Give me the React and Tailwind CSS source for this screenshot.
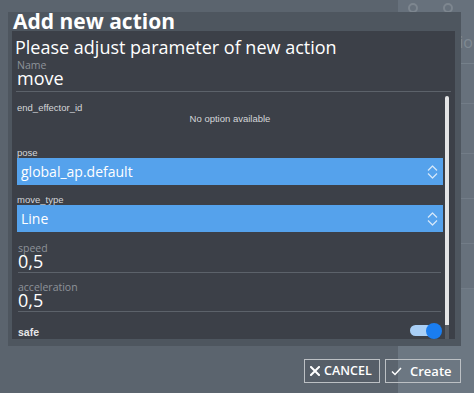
import React from "react";

const Chev = () => (
  <svg width="11" height="16" viewBox="0 0 11 16" fill="none" stroke="#d6e8fa" strokeWidth="1.2" strokeLinejoin="round">
    <path d="M1 6.5 L5.5 2 L10 6.5" />
    <path d="M1 9.5 L5.5 14 L10 9.5" />
  </svg>
);

const Select = ({ label, value, mt }) => (
  <div className={mt}>
    <div className="h-[10px] leading-[10px] text-[9.5px] text-[#d4d6d9]" style={{ fontFamily: '"Liberation Sans", Arial, sans-serif' }}>{label}</div>
    <div className="h-[27px] bg-[#55a2ec] flex items-center justify-between pl-[4px] pr-[5px]">
      <span className="text-[14px] text-white leading-none">{value}</span>
      <Chev />
    </div>
  </div>
);

const NumField = ({ label, value, mt }) => (
  <div className={`${mt} ml-[1px] mr-[2px] border-b border-[#5c626a] pb-[3px]`}>
    <div className="h-[10px] leading-[10px] text-[10.5px] text-[#8e939a]">{label}</div>
    <div className="h-[16px] leading-[16px] text-[18px] text-white">{value}</div>
  </div>
);

export default function App() {
  return (
    <div className="relative w-[474px] h-[393px] overflow-hidden bg-[#5b646e]" style={{ fontFamily: '"Open Sans", "Noto Sans", sans-serif' }}>
      {/* background app */}
      <div className="flex h-full">
        <div className="flex-1" />
        <div className="w-[76px] h-full bg-[#67717c] flex flex-col">
          <div className="h-[20px] relative flex gap-[25px] pl-[10px] pt-[3px]">
            <div className="w-[10px] h-[10px] rounded-full border-2 border-[#7d868f]" />
            <div className="w-[10px] h-[10px] rounded-full border-2 border-[#7d868f]" />
          </div>
          <div className="h-[44px] border-b border-[#75808a] flex items-center justify-end pr-[1px] text-[16px] text-[#7f8992]">io</div>
          <div className="h-[40px] border-b border-[#727c87]" />
          <div className="h-[50px] border-b border-[#727c87]" />
          <div className="h-[45px] border-b border-[#727c87]" />
          <div className="h-[45px] border-b border-[#727c87]" />
          <div className="h-[45px] border-b border-[#727c87]" />
          <div className="flex-1 bg-[#6c7782]" />
        </div>
      </div>

      {/* dialog */}
      <div className="absolute left-[8px] top-[12px] w-[453px]">
        <div className="bg-[#4e565f] h-[334px] flex flex-col">
          <div className="pl-[5px] h-[19px] leading-[19px] text-[21px] font-bold text-white">Add new action</div>
          <div className="ml-[4px] mr-[6px] h-[308px] bg-[#3c4048] flex flex-col overflow-hidden">
            <div className="pt-[5px] pl-[3px] h-[22px] leading-[22px] text-[18px] text-white box-content">Please adjust parameter of new action</div>
            <div className="ml-[4px] mr-[4px] mt-[2px] border-b border-[#5c626a] pb-[5px]">
              <div className="pl-[1px] h-[10px] leading-[10px] text-[10.5px] text-[#8e939a]">Name</div>
              <div className="pl-[1px] h-[16px] leading-[16px] text-[18px] text-white">move</div>
            </div>
            <div className="flex flex-1 min-h-0 pl-[5px] pr-[6px]">
              <div className="flex-1 flex flex-col pt-[10px] overflow-hidden">
                <div className="h-[11px] leading-[11px] text-[9.5px] text-[#d4d6d9]" style={{ fontFamily: '"Liberation Sans", Arial, sans-serif' }}>end_effector_id</div>
                <div className="h-[11px] leading-[11px] text-[9.5px] text-[#d4d6d9] text-center" style={{ fontFamily: '"Liberation Sans", Arial, sans-serif' }}>No option available</div>
                <Select label="pose" value="global_ap.default" mt="mt-[24px]" />
                <Select label="move_type" value="Line" mt="mt-[10px]" />
                <NumField label="speed" value="0,5" mt="mt-[11px]" />
                <NumField label="acceleration" value="0,5" mt="mt-[9px]" />
                <div className="mt-[11px] flex justify-between items-start ml-[1px]">
                  <span className="mt-[4px] h-[10px] leading-[10px] text-[10.5px] font-bold text-[#e6e7e9]" style={{ fontFamily: '"Liberation Sans", Arial, sans-serif' }}>safe</span>
                  <div className="relative w-[32px] h-[16px] mr-[1px]">
                    <div className="absolute left-0 right-[2px] top-[2px] h-[11px] rounded-full bg-[#a9cff6]" />
                    <div className="absolute right-0 top-0 w-[16px] h-[16px] rounded-full bg-[#1a7df0]" />
                  </div>
                </div>
              </div>
              <div className="w-[4px] ml-[2px] mt-[4px] flex flex-col">
                <div className="h-[229px] bg-[#e4e5e6] rounded-t-[2px]" />
                <div className="flex-1 bg-[#575c63]" />
              </div>
            </div>
          </div>
        </div>
        <div className="mt-[13px] flex justify-end gap-[5px]">
          <div className="w-[76px] h-[24px] border border-[#bcc0c4] bg-black/5 flex items-center pl-[5px] gap-[4px] text-white">
            <svg width="10" height="10" viewBox="0 0 10 10" stroke="white" strokeWidth="2" strokeLinecap="square">
              <path d="M1 1 L9 9 M9 1 L1 9" />
            </svg>
            <span className="text-[12.5px] font-semibold leading-none">CANCEL</span>
          </div>
          <div className="w-[76px] h-[24px] border border-[#bcc0c4] flex items-center pl-[5px] gap-[8px] text-white">
            <svg width="11" height="9" viewBox="0 0 11 9" fill="none" stroke="white" strokeWidth="1.5">
              <path d="M1 4.5 L4 7.5 L10 1" />
            </svg>
            <span className="text-[13px] font-semibold leading-none">Create</span>
          </div>
        </div>
      </div>
    </div>
  );
}
